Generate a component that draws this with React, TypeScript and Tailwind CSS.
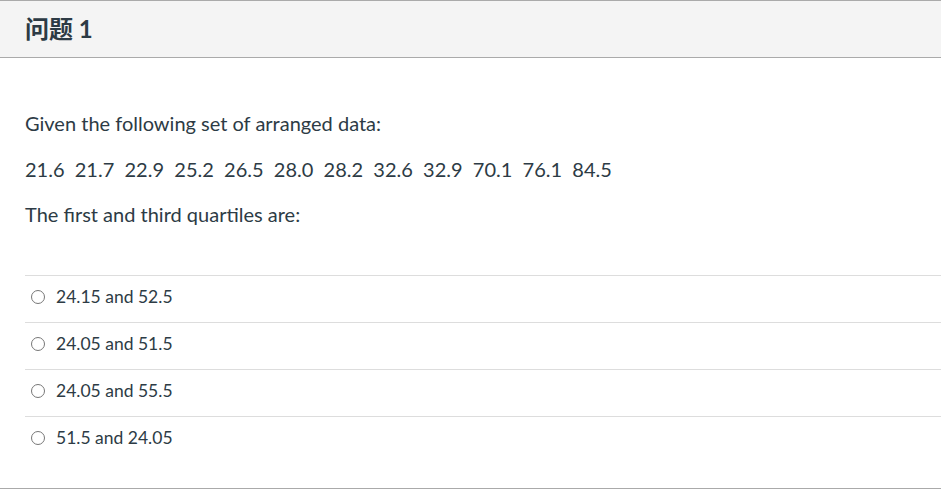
import React from "react";

const answers = ["24.15 and 52.5", "24.05 and 51.5", "24.05 and 55.5", "51.5 and 24.05"];

export default function App() {
  return (
    <div
      className="w-[942px] h-[491px] bg-white text-[#2d3b45]"
      style={{ fontFamily: "Lato, 'Noto Sans CJK SC', sans-serif" }}
    >
      <div className="w-[941px] border-t border-b border-[#aaaaaa]">
        <div className="h-[57px] bg-[#f4f4f4] border-b border-[#aaaaaa] flex items-center pl-[25px]">
          <span className="text-[24px] font-bold text-[#2d3b45]">问题 1</span>
        </div>
        <div className="pl-[25px] pt-[50px]">
          <p className="text-[20px] leading-[30px]">Given the following set of arranged data:</p>
          <p className="text-[20px] leading-[30px] mt-[16px] whitespace-pre">
            21.6  21.7  22.9  25.2  26.5  28.0  28.2  32.6  32.9  70.1  76.1  84.5
          </p>
          <p className="text-[20px] leading-[30px] mt-[15px]">The first and third quartiles are:</p>
          <div className="mt-[46px] pb-[25px]">
            {answers.map((a, i) => (
              <div key={i} className="h-[47px] border-t border-[#dddddd] flex items-center pb-[4px]">
                <span className="ml-[6px] w-[14px] h-[14px] rounded-full border border-[#777777] bg-white" />
                <span className="ml-[11px] text-[17.5px]">{a}</span>
              </div>
            ))}
          </div>
        </div>
      </div>
    </div>
  );
}
